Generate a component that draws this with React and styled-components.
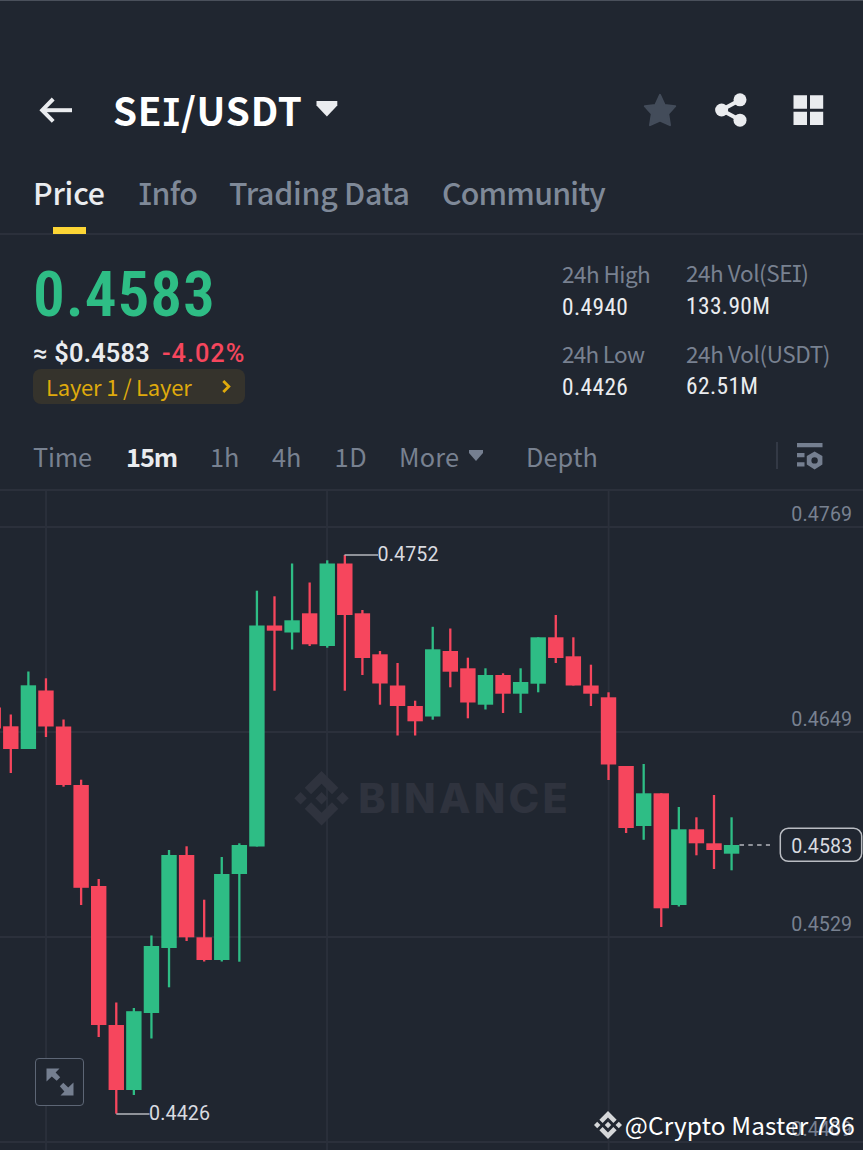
import React from "react";
import styled, { createGlobalStyle } from "styled-components";

const color = {
  bg: "#202630",
  line: "#2b303b",
  white: "#eaecef",
  muted: "#7f8998",
  soft: "#788190",
  icon: "#757f90",
  green: "#2ebd85",
  red: "#f6465d",
  gold: "#dfaa0c",
  yellow: "#fcd535",
};

const labelFont = `"Noto Sans CJK SC", "Noto Sans", sans-serif`;
const numberFont = `Roboto, "Liberation Sans", sans-serif`;

const GlobalStyle = createGlobalStyle`
  * { box-sizing: border-box; }
  body { margin: 0; background: ${color.bg}; }
`;

const Screen = styled.main`
  width: 863px;
  height: 1150px;
  overflow: hidden;
  display: flex;
  flex-direction: column;
  background: ${color.bg};
  border-top: 1px solid #4a505b;
  font-family: ${labelFont};
  color: ${color.white};
  white-space: nowrap;
`;

const SerifCap = styled.span`
  font-family: Inter, sans-serif;
  font-feature-settings: "cv08";
  font-size: 0.985em;
`;

const Header = styled.header`
  display: flex;
  align-items: center;
  height: 139px;
  padding: 79px 39px 0 38px;
`;

const Pair = styled.h1`
  margin: 1px 0 0 40px;
  width: 187px;
  font-size: 38.6px;
  line-height: 56px;
  font-weight: 570;
  letter-spacing: 0.8px;
  color: #fff;
`;

const PairCaret = styled.svg`
  margin: 0 0 2px 16px;
`;

const Actions = styled.div`
  display: flex;
  align-items: center;
  margin-left: auto;
`;

const ActionIcon = styled.svg`
  display: block;
  margin-left: ${(p) => p.$gap || 0}px;
`;

const Tabs = styled.nav`
  display: grid;
  grid-template-columns: 105.5px 90.5px 213px auto;
  height: 95px;
  padding: 32px 0 0 33px;
  border-bottom: 2px solid ${color.line};
`;

const Tab = styled.a`
  position: relative;
  font-size: 30.3px;
  line-height: 40px;
  font-weight: 500;
  letter-spacing: ${(p) => p.$track || 0}px;
  color: ${(p) => (p.$active ? color.white : color.muted)};

  ${(p) =>
    p.$active &&
    `&::after {
      content: "";
      position: absolute;
      left: 20px;
      top: 55px;
      width: 33px;
      height: 7px;
      background: ${color.yellow};
    }`}
`;

const Ticker = styled.section`
  display: flex;
  justify-content: space-between;
  height: 187px;
  padding: 0 33px;
`;

const Quote = styled.div`
  display: flex;
  flex-direction: column;
  align-items: flex-start;
  padding-top: 29px;
`;

const LastPrice = styled.div`
  height: 60px;
  margin-bottom: 14px;
  font: 560 63.4px/60px ${numberFont};
  font-stretch: 84%;
  letter-spacing: 0.9px;
  color: ${color.green};
`;

const SubPrice = styled.div`
  display: flex;
  gap: 12px;
  height: 31px;
  font: 560 25.3px/32px ${numberFont};
  font-stretch: 89%;
  letter-spacing: 0.25px;
`;

const Change = styled.span`
  font-weight: 500;
  font-stretch: 95%;
  letter-spacing: 1px;
  color: ${color.red};
`;

const Tag = styled.a`
  display: flex;
  align-items: center;
  justify-content: space-between;
  width: 212px;
  height: 35px;
  padding: 0 14px 0 13px;
  border-radius: 8px;
  background: #35332c;
  color: ${color.gold};
  font-size: 22px;
  line-height: 33px;
  letter-spacing: -0.2px;
`;

const Stats = styled.div`
  display: grid;
  grid-template-columns: 124px 144px;
`;

const StatColumn = styled.div`
  display: flex;
  flex-direction: column;
  gap: ${(p) => p.$gap}px;
  padding-top: ${(p) => p.$top}px;
`;

const Stat = styled.div`
  display: flex;
  flex-direction: column;
  gap: ${(p) => p.$gap}px;
`;

const StatLabel = styled.span`
  font-size: 22.5px;
  line-height: 30px;
  letter-spacing: ${(p) => p.$track}px;
  color: ${color.soft};
`;

const StatValue = styled.span`
  font: 450 23.4px/30px ${numberFont};
  font-stretch: 86%;
  letter-spacing: 0.4px;
`;

const Intervals = styled.div`
  display: flex;
  align-items: center;
  height: 69px;
  padding-left: 33px;
  border-bottom: 2px solid ${color.line};
`;

const Interval = styled.a`
  width: ${(p) => p.$width}px;
  font-size: 25.3px;
  line-height: 34px;
  font-weight: ${(p) => (p.$active ? 620 : 400)};
  letter-spacing: ${(p) => p.$track || 0}px;
  color: ${(p) => (p.$active ? color.white : color.soft)};
`;

const MoreCaret = styled.svg`
  margin: 0 42px 1px 5px;
`;

const Divider = styled.span`
  width: 2px;
  height: 27px;
  margin-left: auto;
  background: #333945;
`;

const IndicatorIcon = styled.svg`
  margin: 1px 40px 0 19px;
`;

const ChartPanel = styled.section`
  position: relative;
  height: 659px;
`;

const ChartSvg = styled.svg`
  display: block;

  text {
    font-family: ${numberFont};
    font-size: 19.6px;
  }
`;

const AxisLabel = styled.text`
  fill: #788190;
  letter-spacing: 0.1px;
`;

const Callout = styled.text`
  fill: #d9dbe0;
  letter-spacing: 0.15px;
`;

const WatermarkText = styled.text`
  && {
    font-family: Inter, sans-serif;
    font-size: 41.3px;
    font-weight: 800;
    letter-spacing: 3.2px;
    fill: #2f333e;
  }
`;

const ExpandButton = styled.button`
  position: absolute;
  left: 35px;
  top: 567px;
  width: 49px;
  height: 48px;
  padding: 0;
  display: grid;
  place-items: center;
  border: 1.5px solid #5d6675;
  border-radius: 4px;
  background: ${color.bg};
`;

const Credit = styled.div`
  position: absolute;
  right: 8px;
  bottom: 7px;
  display: flex;
  align-items: center;
  gap: 3px;
  font-size: 24.4px;
  line-height: 36px;
  letter-spacing: 0.15px;
  color: #fff;
`;

const up = color.green;
const down = color.red;

// [high, body top, body bottom, low, colour]
const candles = [
  [707.5, 707.5, 728.5, 728.5, down],
  [714.5, 726.3, 749, 773, down],
  [671.5, 685.3, 749, 749, up],
  [678.3, 690.5, 726.5, 737, down],
  [719.5, 726.5, 785, 786.7, down],
  [779.7, 785, 887.8, 905, down],
  [879, 886, 1025, 1037, down],
  [1002.5, 1025, 1090, 1113.7, down],
  [1008, 1011.2, 1090, 1095, up],
  [935.5, 946, 1013, 1038.5, up],
  [850, 855, 948, 987.3, up],
  [846.3, 855, 937.3, 941, down],
  [899.7, 937.3, 960, 961.5, down],
  [857, 874, 960, 961.5, up],
  [843.3, 845, 874, 961.7, up],
  [590.7, 625.5, 846.5, 846.5, up],
  [596.3, 625.5, 630.7, 690.7, down],
  [563.5, 620.3, 632.5, 649.5, up],
  [582.5, 613.3, 644.3, 646, down],
  [560.3, 563.5, 646, 647.7, up],
  [555, 563.5, 615, 690.7, down],
  [610, 613.3, 658, 675, down],
  [651, 654.3, 683.5, 704.7, down],
  [663, 685.5, 706, 735.5, down],
  [700.7, 706, 721.3, 735.5, down],
  [626.8, 649.3, 716.5, 719.7, up],
  [628.5, 651, 671.7, 687.3, down],
  [657.7, 668.3, 702.5, 718.3, down],
  [668.3, 675, 704.7, 709.5, up],
  [673.3, 675, 693.7, 713, down],
  [668.3, 682, 693.7, 713, up],
  [637.3, 637.3, 683.7, 692.3, up],
  [615, 637.3, 658, 663, down],
  [637.3, 656.3, 685.5, 685.5, down],
  [664.7, 685.5, 693.7, 706, down],
  [692.3, 697.3, 764.5, 780, down],
  [766, 766, 828, 833, down],
  [764, 793.3, 826, 839.8, up],
  [793.3, 793.3, 908.3, 927, down],
  [807, 829.3, 905, 906.5, up],
  [817.3, 829.3, 843.3, 855.3, down],
  [795, 843.3, 850, 869, down],
  [817.3, 845, 853.7, 870.3, up],
];

const Candle = ({ x, data: [high, top, bottom, low, fill] }) => (
  <g fill={fill}>
    <rect x={x - 1.15} y={high} width="2.3" height={low - high} />
    <rect x={x - 7.7} y={top} width="15.4" height={bottom - top} />
  </g>
);

const BnbMark = () => (
  <>
    <path d="M12 0 19.4 7.4 16.6 10.2 12 5.6 7.4 10.2 4.6 7.4Z" />
    <path d="M12 24 4.6 16.6 7.4 13.8 12 18.4 16.6 13.8 19.4 16.6Z" />
    <path d="M2.75 9.25 5.5 12 2.75 14.75 0 12Z" />
    <path d="M21.25 9.25 24 12 21.25 14.75 18.5 12Z" />
    <path d="M12 9.25 14.75 12 12 14.75 9.25 12Z" />
  </>
);

const Chart = () => (
  <ChartSvg width="863" height="659" viewBox="0 491 863 659">
    <g stroke={color.line} strokeWidth="1.8">
      {[527, 732, 937, 1142].map((y) => (
        <line key={y} x1="0" x2="863" y1={y} y2={y} />
      ))}
      {[46, 327, 608.6].map((x) => (
        <line key={x} x1={x} x2={x} y1="490" y2="1150" />
      ))}
    </g>
    <g transform="translate(294.3 771) scale(2.27)" fill="#2f333e">
      <BnbMark />
    </g>
    <WatermarkText x="358.3" y="813.3">BINANCE</WatermarkText>
    {candles.map((c, i) => (
      <Candle key={i} x={10.8 + 17.58 * (i - 1)} data={c} />
    ))}
    <g stroke="#b4b7bd" strokeWidth="1.6">
      <line x1="344.5" x2="378" y1="555" y2="555" />
      <line x1="116.3" x2="149.5" y1="1114" y2="1114" />
      <line x1="739.5" x2="770" y1="845" y2="845" strokeDasharray="4.5 4.3" />
    </g>
    <Callout x="377.5" y="560.8">0.4752</Callout>
    <Callout x="149" y="1120.2">0.4426</Callout>
    <AxisLabel x="791.3" y="520.7">0.4769</AxisLabel>
    <AxisLabel x="791.3" y="726.2">0.4649</AxisLabel>
    <AxisLabel x="791.3" y="930.7">0.4529</AxisLabel>
    <AxisLabel x="791.3" y="1136">0.4409</AxisLabel>
    <rect x="780.3" y="828.3" width="81.4" height="33" rx="8" fill={color.bg} stroke="#b9bcc2" strokeWidth="1.5" />
    <Callout x="791.3" y="853">0.4583</Callout>
  </ChartSvg>
);

const StatItem = ({ label, value, track, gap }) => (
  <Stat $gap={gap}>
    <StatLabel $track={track}>{label}</StatLabel>
    <StatValue>{value}</StatValue>
  </Stat>
);

export default function App() {
  return (
    <Screen>
      <GlobalStyle />
      <Header>
        <svg width="35" height="28" viewBox="0 0 35 28" fill="none" stroke={color.white} strokeWidth="4">
          <path d="M4 14.2H34" />
          <path d="M15.2 3 4.2 14.2 15.2 25.4" />
        </svg>
        <Pair>
          SE<SerifCap>I</SerifCap>/USDT
        </Pair>
        <PairCaret width="22" height="16" viewBox="0 0 22 16" fill={color.white}>
          <path d="M0.5 0H21.3V4.5L10.9 15.6 0.5 4.5Z" />
        </PairCaret>
        <Actions>
          <ActionIcon width="34" height="34" viewBox="0 0 34 34" fill="#434c5a" stroke="#434c5a" strokeWidth="2" strokeLinejoin="round">
            <path d="M17 1.8 21.6 12 32.2 13.2 25.2 20.9 27 32.2 17 27.6 7 32.2 8.8 20.9 1.8 13.2 12.4 12Z" />
          </ActionIcon>
          <ActionIcon $gap={38} width="32" height="34" viewBox="0 0 32 34" fill={color.white}>
            <path d="M6.5 17 25 7M6.5 17 25 27" stroke={color.white} strokeWidth="4.2" />
            <circle cx="6.6" cy="17" r="6.5" />
            <circle cx="25" cy="6.8" r="6.5" />
            <circle cx="25" cy="27.2" r="6.5" />
          </ActionIcon>
          <ActionIcon $gap={46} width="31" height="30" viewBox="0 0 31 30" fill={color.white}>
            <path d="M.5 .3h13.5v13.4H.5zM17 .3h13.2v13.4H17zM.5 16.7h13.5V30H.5zM17 16.7h13.2V30H17z" />
          </ActionIcon>
        </Actions>
      </Header>

      <Tabs>
        <Tab $active $track={-0.2}>Price</Tab>
        <Tab $track={-0.6}>
          <SerifCap>I</SerifCap>nfo
        </Tab>
        <Tab $track={-0.25}>Trading Data</Tab>
        <Tab $track={-0.8}>Community</Tab>
      </Tabs>

      <Ticker>
        <Quote>
          <LastPrice>0.4583</LastPrice>
          <SubPrice>
            <span>≈ $0.4583</span>
            <Change>-4.02%</Change>
          </SubPrice>
          <Tag>
            Layer 1 / Layer
            <svg width="9" height="13" viewBox="0 0 9 13" fill="none" stroke={color.gold} strokeWidth="2.8">
              <path d="M1.3 1 6.8 6.5 1.3 12" />
            </svg>
          </Tag>
        </Quote>
        <Stats>
          <StatColumn $top={23} $gap={16}>
            <StatItem label="24h High" value="0.4940" track={-0.55} gap={4} />
            <StatItem label="24h Low" value="0.4426" track={-0.7} gap={4} />
          </StatColumn>
          <StatColumn $top={22} $gap={17}>
            <StatItem
              label={
                <>
                  24h Vol(SE<SerifCap>I</SerifCap>)
                </>
              }
              value="133.90M"
              track={-0.45}
              gap={2}
            />
            <StatItem label="24h Vol(USDT)" value="62.51M" track={-0.4} gap={3} />
          </StatColumn>
        </Stats>
      </Ticker>

      <Intervals>
        <Interval $width={93} $track={-0.2}>Time</Interval>
        <Interval $width={84} $active $track={-1}>15m</Interval>
        <Interval $width={62}>1h</Interval>
        <Interval $width={62.5}>4h</Interval>
        <Interval $width={64.5} $track={0.8}>1D</Interval>
        <Interval $width={64} $track={0.2}>More</Interval>
        <MoreCaret width="16" height="11" viewBox="0 0 16 11" fill={color.icon}>
          <path d="M1 0H15V3L8 11 1 3Z" />
        </MoreCaret>
        <Interval $width={110} $track={0.1}>Depth</Interval>
        <Divider />
        <IndicatorIcon width="26" height="27" viewBox="0 0 26 27" fill={color.icon}>
          <path d="M0 0h25.5v4.3H0zM0 10h7.5v4.3H0zM0 19.3h7.5v4.3H0z" />
          <path fillRule="evenodd" d="M17.6 8.4 25.4 12.9V21.6L17.6 26.4 9.8 21.6V12.9ZM17.6 14.2a3.2 3.2 0 1 0 0 6.4 3.2 3.2 0 1 0 0-6.4Z" />
        </IndicatorIcon>
      </Intervals>

      <ChartPanel>
        <Chart />
        <ExpandButton aria-label="Expand chart">
          <svg width="28" height="28" viewBox="0 0 28 28" fill={color.icon}>
            <path d="M.5.5H13.5L9.6 4.6 14.2 9.2 10.7 12.7 5.8 8.5.5 13.5Z" />
            <path d="M27.5 27.5H14.5L18.4 23.4 13.8 18.3 17.3 14.8 22.2 19.5 27.5 14.5Z" />
          </svg>
        </ExpandButton>
        <Credit>
          <svg width="28" height="28" viewBox="0 0 24 24" fill="#d5d7d9">
            <BnbMark />
          </svg>
          @Crypto Master 786
        </Credit>
      </ChartPanel>
    </Screen>
  );
}
